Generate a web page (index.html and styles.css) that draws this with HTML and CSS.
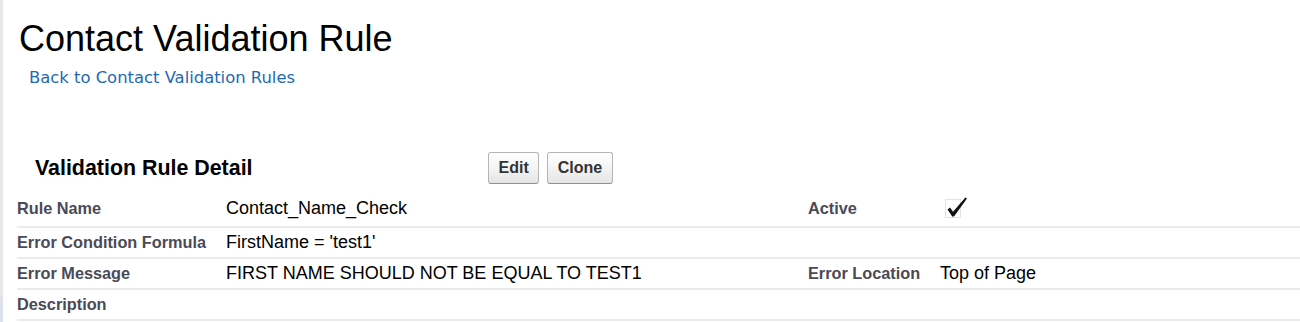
FILE: index.html
```html
<!DOCTYPE html>
<html>
<head>
<meta charset="utf-8">
<link rel="stylesheet" href="styles.css">
</head>
<body>
<div class="page">
  <div class="header">
    <h1 class="title">Contact Validation Rule</h1>
    <a class="back" href="#">Back to Contact Validation Rules</a>
  </div>
  <div class="detail">
    <div class="detail-head">
      <h2 class="detail-title">Validation Rule Detail</h2>
      <div class="buttons">
        <button class="btn">Edit</button>
        <button class="btn">Clone</button>
      </div>
    </div>
    <table class="grid">
      <tr>
        <td class="lbl">Rule Name</td>
        <td class="val">Contact_Name_Check</td>
        <td class="lbl lbl2">Active</td>
        <td class="val val2"><span class="check"><svg width="26" height="26" viewBox="0 0 26 26"><rect x="1.5" y="4.5" width="15" height="18" fill="none" stroke="#c8c8c8" stroke-dasharray="1 1"/><path d="M3.5 14.5 L6 12.6 L9 16.8 L21.4 2.6 L23 3.6 L10 21.6 L8.2 21.6 Z" fill="#111"/></svg></span></td>
      </tr>
      <tr>
        <td class="lbl">Error Condition Formula</td>
        <td class="val">FirstName = 'test1'</td>
        <td class="lbl lbl2"></td>
        <td class="val val2"></td>
      </tr>
      <tr>
        <td class="lbl">Error Message</td>
        <td class="val">FIRST NAME SHOULD NOT BE EQUAL TO TEST1</td>
        <td class="lbl lbl2">Error Location</td>
        <td class="val val2">Top of Page</td>
      </tr>
      <tr>
        <td class="lbl">Description</td>
        <td class="val"></td>
        <td class="lbl lbl2"></td>
        <td class="val val2"></td>
      </tr>
    </table>
  </div>
</div>
</body>
</html>
```
FILE: styles.css
```css
html, body {
  margin: 0;
  padding: 0;
  background: #fff;
}
body {
  font-family: "Liberation Sans", Arial, sans-serif;
  border-left: 3px solid #e8e8e8;
  border-image: linear-gradient(to bottom, #e8e8e8 296px, #dde2ea 296px) 1;
  min-height: 322px;
  box-sizing: border-box;
}
.page {
  padding: 0 0 0 14px;
}
.header {
  padding-top: 19px;
}
.title {
  margin: 0 0 0 2px;
  font-weight: normal;
  font-size: 36px;
  line-height: 40px;
  color: #000;
}
.back {
  display: block;
  width: max-content;
  margin: 9px 0 0 12px;
  font-family: "DejaVu Sans", Verdana, sans-serif;
  font-size: 16.4px;
  line-height: 19px;
  color: #1f69b3;
  text-decoration: none;
}
.detail {
  margin-top: 65px;
}
.detail-head {
  display: flex;
  align-items: center;
  height: 32px;
}
.detail-title {
  margin: 0 0 0 18px;
  width: 453px;
  font-size: 21.4px;
  font-weight: bold;
  color: #000;
}
.buttons {
  display: flex;
  gap: 8px;
}
.btn {
  font-family: "Liberation Sans", Arial, sans-serif;
  font-weight: bold;
  font-size: 16px;
  color: #333;
  height: 32px;
  padding: 0 9.5px;
  border: 1px solid #b5b5b5;
  border-bottom-color: #8f8f8f;
  border-radius: 3px;
  background: linear-gradient(#ffffff, #f4f4f4 50%, #e4e4e4);
}
.grid {
  border-collapse: collapse;
  width: 100%;
  margin-top: 6px;
}
.grid td {
  height: 29px;
  padding: 0;
  border-bottom: 2px solid #ebebeb;
  vertical-align: middle;
}
.grid tr:first-child td {
  height: 36px;
}
.lbl {
  font-weight: bold;
  font-size: 16.3px;
  color: #4a4a56;
  width: 209px;
}
.val {
  font-size: 18px;
  color: #000;
  width: 582px;
}
.lbl2 {
  width: 132px;
}
.val2 {
  width: auto;
}
.check {
  display: inline-block;
  margin-left: 4px;
  vertical-align: middle;
}
.check svg {
  display: block;
}
```
